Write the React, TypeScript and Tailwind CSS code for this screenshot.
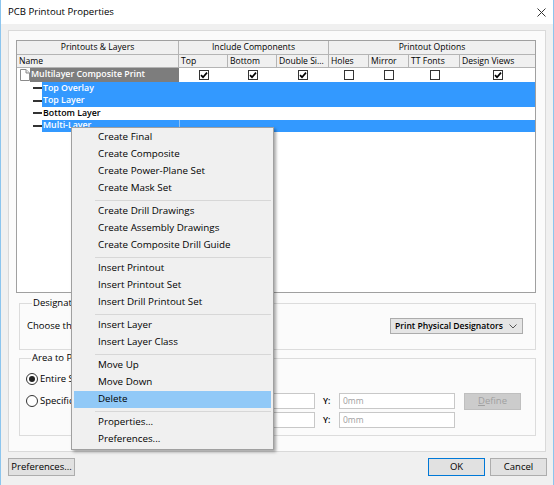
import React from "react"

const ui = "font-['Open_Sans','Noto_Sans',sans-serif]"

function Check({ on }: { on: boolean }) {
  return (
    <span className="flex h-[10px] w-[10px] items-center justify-center border border-[#333] bg-white">
      {on && (
        <svg width="8" height="8" viewBox="0 0 8 8">
          <path d="M1 4.2 L3 6.2 L7 1.6" fill="none" stroke="#000" strokeWidth="1.7" />
        </svg>
      )}
    </span>
  )
}

function Radio({ on }: { on: boolean }) {
  return (
    <span className="flex h-[12px] w-[12px] shrink-0 items-center justify-center rounded-full border border-[#333] bg-white">
      {on && <span className="h-[6px] w-[6px] rounded-full bg-[#222]" />}
    </span>
  )
}

function Dash() {
  return <span className="ml-[16px] h-[2px] w-[9px] shrink-0 bg-[#333]" />
}

type MenuEntry = string | null

const menu: MenuEntry[] = [
  "Create Final",
  "Create Composite",
  "Create Power-Plane Set",
  "Create Mask Set",
  null,
  "Create Drill Drawings",
  "Create Assembly Drawings",
  "Create Composite Drill Guide",
  null,
  "Insert Printout",
  "Insert Printout Set",
  "Insert Drill Printout Set",
  null,
  "Insert Layer",
  "Insert Layer Class",
  null,
  "Move Up",
  "Move Down",
  "Delete",
  null,
  "Properties...",
  "Preferences...",
]

function ContextMenu() {
  return (
    <div className="absolute left-[70px] top-[127px] w-[203px] border border-[#a0a0a0] bg-[#f0f0f0] py-[1px] shadow-[2px_2px_3px_rgba(0,0,0,0.35)]">
      {menu.map((item, i) =>
        item === null ? (
          <div key={i} className="flex h-[6px] items-center pl-[23px] pr-[2px]">
            <div className="h-px w-full bg-[#d7d7d7]" />
          </div>
        ) : (
          <div
            key={i}
            className={`mx-[2px] flex h-[17px] items-center whitespace-nowrap pl-[24px] text-[9.8px] text-black ${
              item === "Delete" ? "bg-[#91c9f7]" : ""
            }`}
          >
            {item}
          </div>
        )
      )}
    </div>
  )
}

function ListBox() {
  return (
    <div className="ml-[7px] mt-[9px] h-[253px] w-[520px] border border-[#a0a0a0] bg-white text-[8.6px] text-black">
      {/* Header */}
      <div className="flex h-[14px] whitespace-nowrap bg-[#f0f0f0]">
        <div className="flex w-[162px] items-center justify-center border-b border-r border-[#b4b4b4]">Printouts &amp; Layers</div>
        <div className="flex w-[150px] items-center justify-center border-b border-r border-[#b4b4b4]">Include Components</div>
        <div className="flex flex-1 items-center justify-center border-b border-[#b4b4b4]">Printout Options</div>
      </div>
      <div className="flex h-[13px] whitespace-nowrap bg-[#f0f0f0] leading-none">
        <div className="flex w-[162px] items-center border-b border-r border-[#b4b4b4] pl-[2px]">Name</div>
        <div className="flex w-[49px] items-center border-b border-r border-[#b4b4b4] pl-[2px]">Top</div>
        <div className="flex w-[49px] items-center border-b border-r border-[#b4b4b4] pl-[2px]">Bottom</div>
        <div className="flex w-[52px] items-center overflow-hidden border-b border-r border-[#b4b4b4] pl-[2px]">Double Si...</div>
        <div className="flex w-[40px] items-center border-b border-r border-[#b4b4b4] pl-[2px]">Holes</div>
        <div className="flex w-[40px] items-center border-b border-r border-[#b4b4b4] pl-[2px]">Mirror</div>
        <div className="flex w-[51px] items-center border-b border-r border-[#b4b4b4] pl-[2px]">TT Fonts</div>
        <div className="flex flex-1 items-center border-b border-[#b4b4b4] pl-[2px]">Design Views</div>
      </div>

      {/* Tree rows */}
      <div className="flex h-[14px] items-center whitespace-nowrap text-[8.8px] font-semibold">
        <div className="flex w-[162px] items-center">
          <svg className="ml-[2px] shrink-0" width="11" height="12" viewBox="0 0 11 12">
            <path d="M1.5 0.5 H7 L10.5 4 V11.5 H1.5 Z" fill="#fff" stroke="#8a8a8a" />
            <path d="M7 0.5 V4 H10.5" fill="#e6e6e6" stroke="#8a8a8a" />
          </svg>
          <span className="flex h-[14px] flex-1 items-center bg-[#7d7d7d] pl-[1px] text-white">Multilayer Composite Print</span>
        </div>
        <div className="flex w-[49px] justify-center"><Check on /></div>
        <div className="flex w-[49px] justify-center"><Check on /></div>
        <div className="flex w-[52px] justify-center"><Check on /></div>
        <div className="flex w-[40px] justify-center"><Check on={false} /></div>
        <div className="flex w-[40px] justify-center"><Check on={false} /></div>
        <div className="flex w-[51px] justify-center"><Check on={false} /></div>
        <div className="flex flex-1 justify-center"><Check on /></div>
      </div>
      <div className="flex h-[12.5px] items-center text-[8.8px] font-semibold">
        <Dash />
        <span className="flex h-full flex-1 items-center bg-[#3399ff] pl-[1px] text-white">Top Overlay</span>
      </div>
      <div className="flex h-[12.5px] items-center text-[8.8px] font-semibold">
        <Dash />
        <span className="flex h-full flex-1 items-center bg-[#3399ff] pl-[1px] text-white">Top Layer</span>
      </div>
      <div className="flex h-[12.5px] items-center text-[8.8px] font-semibold">
        <Dash />
        <span className="flex h-full flex-1 items-center pl-[1px]">Bottom Layer</span>
      </div>
      <div className="flex h-[12.5px] items-center text-[8.8px] font-semibold">
        <Dash />
        <div className="flex h-full flex-1 bg-[#3399ff] text-white">
          <span className="flex w-[137px] items-center pl-[1px]">Multi-Layer</span>
          <span className="w-px bg-[#8ec3f7]" />
          <span className="flex-1" />
        </div>
      </div>
    </div>
  )
}

function Designator() {
  return (
    <fieldset className="ml-[10px] mt-[4px] h-[53px] w-[517px] border border-[#dcdcdc] pl-[7px] pr-[12px]">
      <legend className="ml-[5px] whitespace-nowrap px-[1px] text-[9.5px] leading-[12px]">Designator Print Settings</legend>
      <div className="mt-[9px] flex h-[16px] items-center justify-between whitespace-nowrap">
        <span className="text-[9.5px]">Choose the designator output</span>
        <div className="flex h-[16px] w-[133px] items-center justify-between border border-[#acacac] bg-[#e5e5e5] pl-[4px] pr-[5px]">
          <span className="text-[8.6px] font-semibold">Print Physical Designators</span>
          <svg width="8" height="5" viewBox="0 0 8 5">
            <path d="M0.5 0.5 L4 4 L7.5 0.5" fill="none" stroke="#555" strokeWidth="1" />
          </svg>
        </div>
      </div>
    </fieldset>
  )
}

function Field() {
  return (
    <span className="flex h-[16px] w-[116px] items-center border border-[#c8c8c8] bg-white pl-[3px] text-[8.5px] text-[#a0a0a0]">0mm</span>
  )
}

function AreaToPrint() {
  return (
    <fieldset className="ml-[10px] mt-[2px] h-[84px] w-[517px] border border-[#dcdcdc] pl-[6px] pr-[13px]">
      <legend className="ml-[5px] whitespace-nowrap px-[1px] text-[9.5px] leading-[12px]">Area to Print</legend>
      <div className="mt-[9px] flex h-[12px] items-center gap-[2px] whitespace-nowrap text-[9.5px]">
        <Radio on />
        <span>Entire Sheet</span>
      </div>
      <div className="mt-[8px] flex h-[16px] items-center whitespace-nowrap text-[9.5px]">
        <div className="flex w-[154px] items-center gap-[2px]">
          <Radio on={false} />
          <span>Specific Area</span>
        </div>
        <span className="w-[19px] text-[8.5px] font-semibold">X:</span>
        <Field />
        <span className="ml-[8px] w-[16px] text-[8.5px] font-semibold">Y:</span>
        <Field />
        <span className="ml-[9px] flex h-[17px] w-[57px] items-center justify-center border border-[#bfbfbf] bg-[#cccccc] text-[9.5px] text-[#a0a0a0]">
          <span><span className="underline">D</span>efine</span>
        </span>
      </div>
      <div className="mt-[3px] flex h-[16px] items-center whitespace-nowrap text-[9.5px]">
        <div className="w-[154px]" />
        <span className="w-[19px] text-[8.5px] font-semibold">X:</span>
        <Field />
        <span className="ml-[8px] w-[16px] text-[8.5px] font-semibold">Y:</span>
        <Field />
      </div>
    </fieldset>
  )
}

export default function App() {
  return (
    <div className={`${ui} relative h-[485px] w-[554px] overflow-hidden border-x border-[#8cc5ee] bg-[#f0f0f0] text-black`}>
      {/* Title bar */}
      <div className="flex h-[24px] items-center justify-between bg-white pl-[7px] pr-[7px]">
        <span className="text-[9.6px]">PCB Printout Properties</span>
        <svg width="9" height="9" viewBox="0 0 9 9">
          <path d="M0.5 0.5 L8.5 8.5 M8.5 0.5 L0.5 8.5" stroke="#333" strokeWidth="1" />
        </svg>
      </div>

      <div className="pl-[7px] pt-[6px]">
        {/* Tab page */}
        <div className="h-[422px] w-[538px] border border-[#d9d9d9] bg-[#fbfbfb]">
          <ListBox />
          <Designator />
          <AreaToPrint />
        </div>

        {/* Buttons */}
        <div className="mt-[6px] flex h-[18px] items-center text-[9.5px]">
          <button className="flex h-[18px] w-[67px] items-center justify-center border border-[#adadad] bg-[#e1e1e1]">Preferences...</button>
          <button className="ml-[353px] flex h-[18px] w-[57px] items-center justify-center border border-[#0078d7] bg-[#e1e1e1]">OK</button>
          <button className="ml-[5px] flex h-[18px] w-[57px] items-center justify-center border border-[#adadad] bg-[#e1e1e1]">Cancel</button>
        </div>
      </div>

      <ContextMenu />
    </div>
  )
}
